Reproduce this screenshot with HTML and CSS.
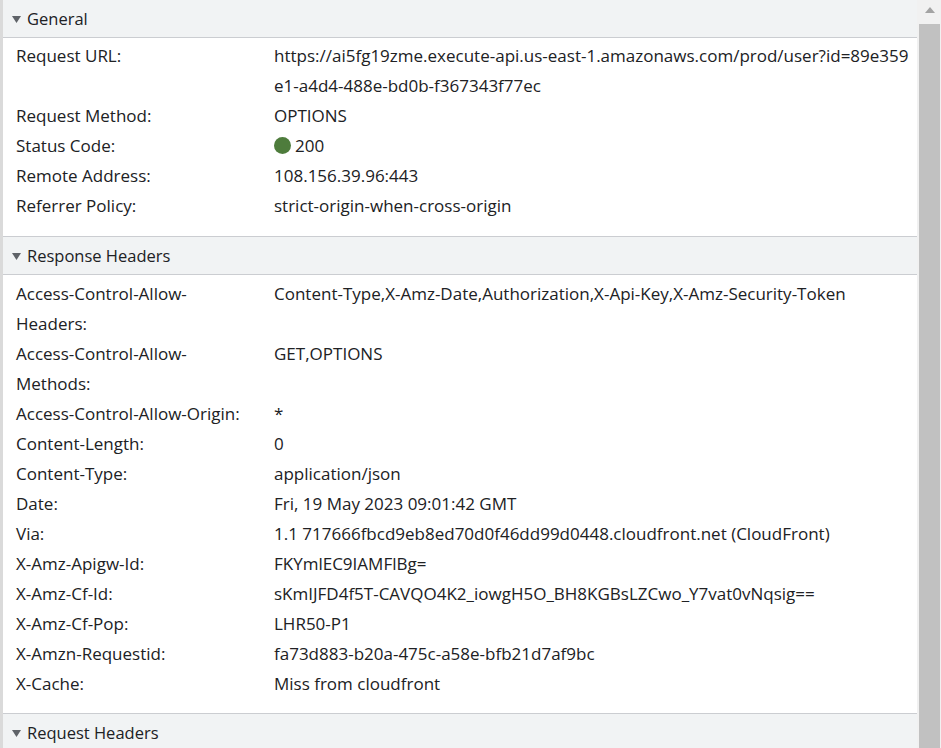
FILE: index.html
```html
<!DOCTYPE html>
<html>
<head>
<meta charset="utf-8">
<link rel="stylesheet" href="styles.css">
</head>
<body>
<div class="frame">
  <div class="panel">
    <section class="section">
      <div class="sec-head"><svg class="tri" width="9" height="7" viewBox="0 0 9 7"><polygon points="0,0 9,0 4.5,7"/></svg><span>General</span></div>
      <div class="rows rows-first">
        <div class="name">Request URL:</div><div class="val">https://ai5fg19zme.execute-api.us-east-1.amazonaws.com/prod/user?id=89e359e1-a4d4-488e-bd0b-f367343f77ec</div>
        <div class="name">Request Method:</div><div class="val">OPTIONS</div>
        <div class="name">Status Code:</div><div class="val"><span class="dot"></span>200</div>
        <div class="name">Remote Address:</div><div class="val">108.156.39.96:443</div>
        <div class="name">Referrer Policy:</div><div class="val">strict-origin-when-cross-origin</div>
      </div>
    </section>
    <section class="section">
      <div class="sec-head"><svg class="tri" width="9" height="7" viewBox="0 0 9 7"><polygon points="0,0 9,0 4.5,7"/></svg><span>Response Headers</span></div>
      <div class="rows">
        <div class="name">Access-Control-Allow-Headers:</div><div class="val">Content-Type,X-Amz-Date,Authorization,X-Api-Key,X-Amz-Security-Token</div>
        <div class="name">Access-Control-Allow-Methods:</div><div class="val">GET,OPTIONS</div>
        <div class="name">Access-Control-Allow-Origin:</div><div class="val">*</div>
        <div class="name">Content-Length:</div><div class="val">0</div>
        <div class="name">Content-Type:</div><div class="val">application/json</div>
        <div class="name">Date:</div><div class="val">Fri, 19 May 2023 09:01:42 GMT</div>
        <div class="name">Via:</div><div class="val">1.1 717666fbcd9eb8ed70d0f46dd99d0448.cloudfront.net (CloudFront)</div>
        <div class="name">X-Amz-Apigw-Id:</div><div class="val">FKYmlEC9IAMFlBg=</div>
        <div class="name">X-Amz-Cf-Id:</div><div class="val">sKmIJFD4f5T-CAVQO4K2_iowgH5O_BH8KGBsLZCwo_Y7vat0vNqsig==</div>
        <div class="name">X-Amz-Cf-Pop:</div><div class="val">LHR50-P1</div>
        <div class="name">X-Amzn-Requestid:</div><div class="val">fa73d883-b20a-475c-a58e-bfb21d7af9bc</div>
        <div class="name">X-Cache:</div><div class="val">Miss from cloudfront</div>
      </div>
    </section>
    <section class="section">
      <div class="sec-head"><svg class="tri" width="9" height="7" viewBox="0 0 9 7"><polygon points="0,0 9,0 4.5,7"/></svg><span>Request Headers</span></div>
    </section>
  </div>
  <div class="scrollbar">
    <div class="sb-arrow"><svg width="10" height="6" viewBox="0 0 10 6"><polygon points="0,6 10,6 5,0"/></svg></div>
    <div class="sb-thumb"></div>
  </div>
</div>
</body>
</html>
```
FILE: styles.css
```css
html, body {
  margin: 0;
  padding: 0;
  background: #ffffff;
}
body {
  font-family: "Open Sans", "Noto Sans", sans-serif;
  font-size: 17px;
  color: #202124;
  overflow: hidden;
}
.frame {
  display: flex;
  width: 941px;
  height: 748px;
  overflow: hidden;
}
.panel {
  width: 914px;
  border-left: 3px solid #dadada;
  margin-top: -1px;
  overflow: hidden;
}
.sec-head {
  height: 37px;
  background: #f1f3f4;
  border-top: 1px solid #cbcdd1;
  border-bottom: 1px solid #cbcdd1;
  display: flex;
  align-items: center;
  padding-left: 9px;
  font-size: 16.5px;
}
.tri {
  fill: #5f6368;
  margin-right: 6px;
  margin-top: 1px;
}
.rows {
  display: grid;
  grid-template-columns: 258px 1fr;
  padding: 4px 2px 14px 13px;
  line-height: 30px;
}
.rows-first {
  padding-top: 3px;
  padding-bottom: 15px;
}
.name {
  padding-right: 24px;
}
.val {
  word-break: break-all;
}
.dot {
  display: inline-block;
  width: 17px;
  height: 17px;
  border-radius: 50%;
  background: #4e7c3c;
  margin-right: 4px;
  vertical-align: -2px;
}
.scrollbar {
  width: 24px;
  background: #f1f1f1;
  display: flex;
  flex-direction: column;
}
.sb-arrow {
  height: 24px;
  display: flex;
  justify-content: center;
  align-items: center;
  padding-bottom: 4px;
  box-sizing: border-box;
}
.sb-arrow svg {
  fill: #a3a3a3;
  margin-left: 1px;
}
.sb-thumb {
  flex: 1;
  background: #c1c1c1;
  margin: 0 1px 0 2px;
}
```
